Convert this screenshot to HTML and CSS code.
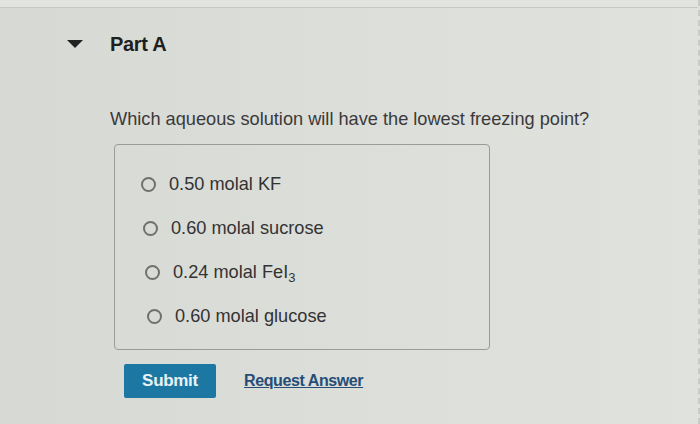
FILE: index.html
```html
<!DOCTYPE html>
<html>
<head>
<meta charset="utf-8">
<link rel="stylesheet" href="styles.css">
</head>
<body>
<div class="page">
  <div class="topline"></div>
  <div class="part-header">
    <span class="caret"></span>
    <h2 class="part-title">Part A</h2>
  </div>
  <div class="content">
    <p class="question">Which aqueous solution will have the lowest freezing point?</p>
    <div class="choices">
      <label class="choice"><span class="radio"></span><span class="label">0.50 molal KF</span></label>
      <label class="choice c2"><span class="radio"></span><span class="label">0.60 molal sucrose</span></label>
      <label class="choice c3"><span class="radio"></span><span class="label">0.24 molal FeI<sub>3</sub></span></label>
      <label class="choice c4"><span class="radio"></span><span class="label">0.60 molal glucose</span></label>
    </div>
    <div class="actions">
      <button class="submit">Submit</button>
      <a class="request">Request Answer</a>
    </div>
  </div>
</div>
</body>
</html>
```

FILE: styles.css
```css
html, body {
  margin: 0;
  padding: 0;
}
body {
  width: 700px;
  height: 424px;
  overflow: hidden;
  background: linear-gradient(90deg, #d7d9d5 0%, #dcdeda 50%, #e0e2de 100%);
  font-family: "Liberation Sans", Arial, sans-serif;
}
.page {
  height: 424px;
  border-right: 2px dashed #c9cbc7;
  box-sizing: border-box;
}
.topline {
  height: 7px;
  border-bottom: 1px solid #c6c8c4;
  background: #e2e4e0;
}
.part-header {
  display: flex;
  align-items: center;
  height: 32px;
  margin-top: 20px;
  padding-left: 67px;
}
.caret {
  width: 0;
  height: 0;
  border-left: 8px solid transparent;
  border-right: 8px solid transparent;
  border-top: 8px solid #222;
  margin-right: 27px;
}
.part-title {
  margin: 0;
  font-size: 20px;
  font-weight: bold;
  color: #1f1f1f;
  letter-spacing: -0.3px;
}
.content {
  padding-left: 110px;
}
.question {
  margin: 48px 0 0 0;
  font-size: 18.2px;
  line-height: 22px;
  color: #3a3a3a;
}
.choices {
  margin: 14px 0 0 4px;
  width: 376px;
  height: 206px;
  box-sizing: border-box;
  border: 1.5px solid #9a9c98;
  border-radius: 4px;
  padding: 28px 0 0 26px;
  display: flex;
  flex-direction: column;
  gap: 22px;
}
.choice {
  display: flex;
  align-items: center;
  height: 22px;
  font-size: 18.2px;
  color: #333;
}
.c2 { padding-left: 2px; }
.c3 { padding-left: 4px; }
.c4 { padding-left: 6px; }
.radio {
  width: 11px;
  height: 11px;
  border: 2px solid #6f716d;
  border-radius: 50%;
  margin-right: 13px;
  flex: none;
}
.label sub {
  font-size: 13px;
  vertical-align: -4px;
  line-height: 0;
}
.actions {
  display: flex;
  align-items: center;
  margin: 14px 0 0 14px;
  gap: 28px;
}
.submit {
  width: 92px;
  height: 34px;
  border: none;
  border-radius: 2px;
  background: #1c78a2;
  color: #e8f2f6;
  font-family: "Liberation Sans", Arial, sans-serif;
  font-size: 17px;
  font-weight: bold;
  letter-spacing: -0.3px;
  padding: 0;
}
.request {
  font-size: 16px;
  font-weight: bold;
  color: #254d77;
  text-decoration: underline;
  letter-spacing: -0.4px;
}
```
